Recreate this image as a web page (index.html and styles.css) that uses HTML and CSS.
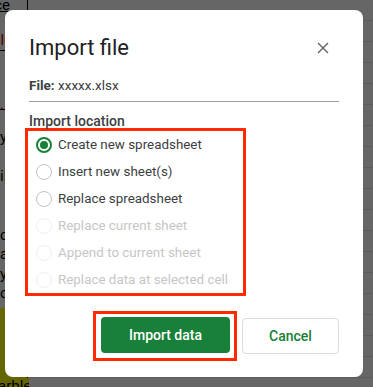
FILE: index.html
```html
<!DOCTYPE html>
<html lang="en">
<head>
    <meta charset="UTF-8">
    <meta name="viewport" content="width=device-width, initial-scale=1.0">
    <title>Import file</title>
    <link rel="stylesheet" href="styles.css">
</head>
<body>

<!-- Hoja de cálculo de fondo -->
<div class="hoja">
    <div class="celda celda-top">Price</div>
    <div class="celda celda-alta"><span class="rojo">blue</span></div>
    <div class="celda celda-media"><span class="rojo">e</span><br><span class="rojo">.</span></div>
    <div class="celda celda-texto">y<br><br>il<br><br><br>o<br>ar<br>y<br>o</div>
    <div class="celda celda-amarilla"></div>
    <div class="celda celda-ultima">arble</div>
</div>

<!-- Capa oscura -->
<div class="capa"></div>

<!-- Diálogo -->
<div class="dialogo">
    <div class="cabecera">
        <h1 class="titulo">Import file</h1>
        <svg class="cerrar" width="12" height="12" viewBox="0 0 12 12">
            <path d="M1 1L11 11M11 1L1 11" stroke="#5f6368" stroke-width="1.4" fill="none"/>
        </svg>
    </div>

    <div class="archivo"><b>File:</b> xxxxx.xlsx</div>
    <div class="separador"></div>

    <div class="subtitulo">Import location</div>

    <div class="opciones marcado">
        <div class="opcion">
            <span class="radio activo"></span>
            <span>Create new spreadsheet</span>
        </div>
        <div class="opcion">
            <span class="radio"></span>
            <span>Insert new sheet(s)</span>
        </div>
        <div class="opcion">
            <span class="radio"></span>
            <span>Replace spreadsheet</span>
        </div>
        <div class="opcion deshabilitada">
            <span class="radio"></span>
            <span>Replace current sheet</span>
        </div>
        <div class="opcion deshabilitada">
            <span class="radio"></span>
            <span>Append to current sheet</span>
        </div>
        <div class="opcion deshabilitada">
            <span class="radio"></span>
            <span>Replace data at selected cell</span>
        </div>
    </div>

    <div class="botones">
        <div class="marcado marco-boton">
            <button class="boton boton-importar">Import data</button>
        </div>
        <button class="boton boton-cancelar">Cancel</button>
    </div>
</div>

</body>
</html>
```

FILE: styles.css
```css
body {
    margin: 0;
    padding: 0;
    width: 373px;
    height: 387px;
    overflow: hidden;
    position: relative;
    background: #fff;
    font-family: Roboto, "Liberation Sans", Arial, sans-serif;
}

/* Hoja de fondo */
.hoja {
    display: flex;
    flex-direction: column;
    width: 100%;
    height: 100%;
    font-size: 15px;
    color: #000;
    background-image: repeating-linear-gradient(to bottom, transparent 0, transparent 20px, #e6e6e6 20px, #e6e6e6 21px);
}

.celda {
    width: 28px;
    border-right: 1px solid #000;
    border-bottom: 1px solid #000;
    overflow: hidden;
    box-sizing: border-box;
    padding-left: 0;
    line-height: 16px;
    background: #fff;
    text-indent: -14px;
    white-space: nowrap;
}

.celda-top {
    height: 12px;
    line-height: 10px;
    text-indent: -24px;
}

.celda-alta {
    height: 39px;
    padding-top: 20px;
    text-indent: -8px;
}

.celda-media {
    height: 59px;
    padding-top: 38px;
    line-height: 10px;
}

.celda-texto {
    height: 198px;
    border-bottom: none;
    padding-top: 18px;
    line-height: 19.5px;
    text-indent: 0;
}

.celda-amarilla {
    height: 70px;
    background: #ffff00;
    border-bottom: none;
}

.celda-ultima {
    background: #ffff00;
    height: 9px;
    line-height: 16px;
    text-indent: -2px;
    border: none;
    width: 29px;
}

.rojo {
    color: #cc0000;
}

/* Capa oscura sobre la hoja */
.capa {
    position: absolute;
    inset: 0;
    background: rgba(0, 0, 0, 0.6);
}

/* Diálogo */
.dialogo {
    position: absolute;
    left: 5px;
    top: 10px;
    width: 358px;
    height: 367px;
    box-sizing: border-box;
    padding: 23px 24px 0 24px;
    background: #fff;
    border-radius: 8px;
    color: #3c4043;
}

.cabecera {
    display: flex;
    justify-content: space-between;
    align-items: center;
    height: 30px;
}

.titulo {
    margin: 0;
    font-size: 22px;
    font-weight: 400;
    color: #202124;
    line-height: 30px;
}

.cerrar {
    margin-right: 10px;
}

.archivo {
    margin-top: 12px;
    font-size: 13.5px;
    line-height: 20px;
    color: #3c4043;
}

.archivo b {
    font-weight: 700;
}

.separador {
    height: 1px;
    background: #9aa0a6;
    margin-top: 6px;
    width: 310px;
}

.subtitulo {
    margin-top: 10px;
    font-size: 14px;
    font-weight: 500;
    line-height: 18px;
    color: #3c4043;
}

/* Recuadro rojo */
.marcado {
    border: 3px solid #ff2a00;
}

.opciones {
    width: 221px;
    box-sizing: border-box;
    margin-left: -4px;
    margin-top: -2px;
}

.opcion {
    display: flex;
    align-items: center;
    gap: 6px;
    height: 27px;
    padding-left: 8px;
    font-size: 13.4px;
    color: #3c4043;
}

.radio {
    width: 16px;
    height: 16px;
    box-sizing: border-box;
    border: 1.5px solid #c2c2c2;
    border-radius: 50%;
    flex-shrink: 0;
}

.radio.activo {
    border: 2px solid #188038;
    position: relative;
}

.radio.activo::after {
    content: "";
    position: absolute;
    left: 2px;
    top: 2px;
    width: 8px;
    height: 8px;
    border-radius: 50%;
    background: #188038;
}

.deshabilitada {
    color: #c6c6c6;
}

.deshabilitada .radio {
    border-color: #efefef;
}

/* Botones */
.botones {
    display: flex;
    justify-content: flex-end;
    align-items: center;
    gap: 5px;
    margin-top: 15px;
}

.marco-boton {
    padding: 3px 4px 5px 5px;
}

.boton {
    height: 36px;
    border-radius: 4px;
    font-family: Roboto, "Liberation Sans", Arial, sans-serif;
    font-size: 14px;
    font-weight: 500;
    cursor: pointer;
    display: block;
}

.boton-importar {
    width: 129px;
    background: #188038;
    color: #fff;
    border: none;
}

.boton-cancelar {
    width: 97px;
    background: #fff;
    color: #188038;
    border: 1px solid #dadce0;
}
```
